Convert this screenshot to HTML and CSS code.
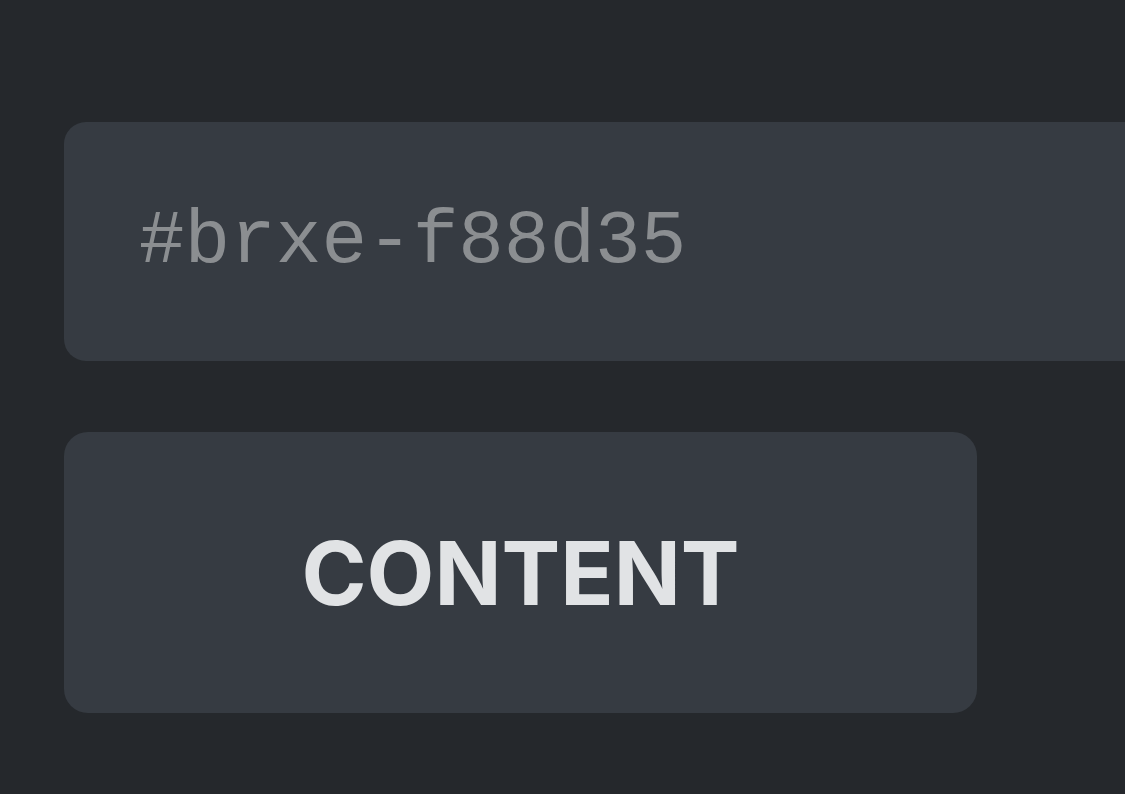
FILE: index.html
```html
<!DOCTYPE html>
<html lang="en">
<head>
  <meta charset="UTF-8">
  <meta name="viewport" content="width=device-width, initial-scale=1.0">
  <title>Element ID</title>
  <link rel="stylesheet" href="styles.css">
</head>
<body>
  <div class="panel">
    <input class="id-field" type="text" placeholder="#brxe-f88d35">
    <button class="tab-btn" type="button">Content</button>
  </div>
</body>
</html>
```
FILE: styles.css
```css
html, body {
  margin: 0;
  padding: 0;
  background: #25282c;
  overflow: hidden;
  height: 100%;
}
.panel {
  display: flex;
  flex-direction: column;
  align-items: flex-start;
  gap: 71px;
  padding: 122px 0 0 64px;
}
/* field runs on past the right edge, so only the left corners are rounded */
.id-field {
  box-sizing: border-box;
  width: calc(100vw - 64px);
  height: 239px;
  flex-shrink: 0;
  border: none;
  outline: none;
  border-radius: 22px 0 0 22px;
  background: #363b42;
  padding: 0 0 0 75px;
  font-family: "Nimbus Mono PS", "Courier", "FreeMono", "Liberation Mono", monospace;
  font-size: 76px;
  color: #8b8e91;
}
.id-field::placeholder {
  color: #8b8e91;
  opacity: 1;
}
.tab-btn {
  box-sizing: border-box;
  width: 913px;
  height: 281px;
  border: none;
  border-radius: 24px;
  background: #363b42;
  color: #e1e3e5;
  font-family: Inter, "Liberation Sans", sans-serif;
  font-weight: 700;
  font-size: 88px;
  text-transform: uppercase;
  padding: 0;
  cursor: pointer;
}
```
